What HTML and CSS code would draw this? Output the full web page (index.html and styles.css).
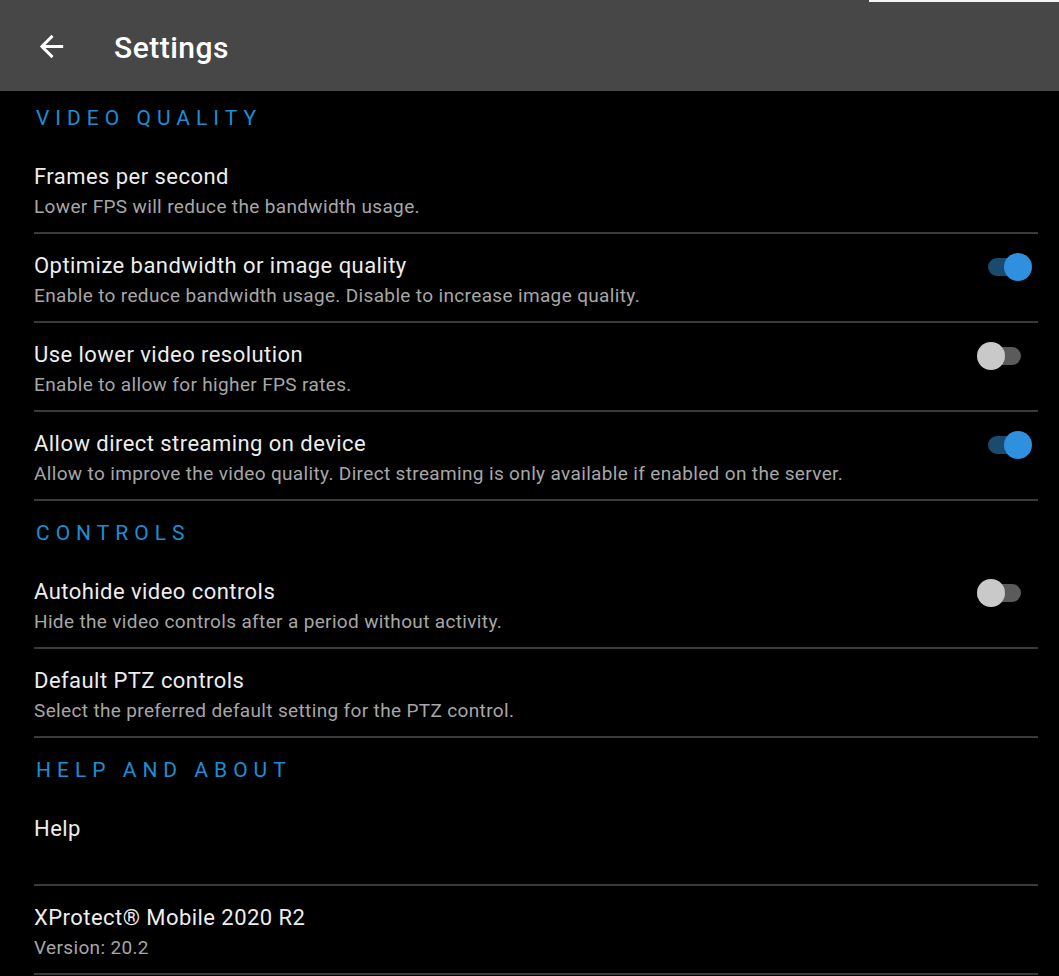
FILE: index.html
```html
<!DOCTYPE html>
<html lang="en">
<head>
<meta charset="utf-8">
<title>Settings</title>
<link rel="stylesheet" href="styles.css">
</head>
<body>
<div class="screen">
  <div class="status-strip"></div>
  <header class="appbar">
    <svg class="back" viewBox="0 0 24 24" width="35" height="35" aria-hidden="true">
      <path fill="#fff" d="M20 11H7.83l5.59-5.59L12 4l-8 8 8 8 1.41-1.41L7.83 13H20v-2z"/>
    </svg>
    <h1 class="appbar-title">Settings</h1>
  </header>

  <main class="list">
    <div class="category category-first">VIDEO QUALITY</div>

    <div class="pref">
      <div class="pref-text">
        <div class="pref-title">Frames per second</div>
        <div class="pref-summary">Lower FPS will reduce the bandwidth usage.</div>
      </div>
    </div>

    <div class="pref">
      <div class="pref-text">
        <div class="pref-title">Optimize bandwidth or image quality</div>
        <div class="pref-summary">Enable to reduce bandwidth usage. Disable to increase image quality.</div>
      </div>
      <div class="switch on"><span class="track"></span><span class="thumb"></span></div>
    </div>

    <div class="pref">
      <div class="pref-text">
        <div class="pref-title">Use lower video resolution</div>
        <div class="pref-summary">Enable to allow for higher FPS rates.</div>
      </div>
      <div class="switch"><span class="track"></span><span class="thumb"></span></div>
    </div>

    <div class="pref">
      <div class="pref-text">
        <div class="pref-title">Allow direct streaming on device</div>
        <div class="pref-summary">Allow to improve the video quality. Direct streaming is only available if enabled on the server.</div>
      </div>
      <div class="switch on"><span class="track"></span><span class="thumb"></span></div>
    </div>

    <div class="category">CONTROLS</div>

    <div class="pref">
      <div class="pref-text">
        <div class="pref-title">Autohide video controls</div>
        <div class="pref-summary">Hide the video controls after a period without activity.</div>
      </div>
      <div class="switch"><span class="track"></span><span class="thumb"></span></div>
    </div>

    <div class="pref">
      <div class="pref-text">
        <div class="pref-title">Default PTZ controls</div>
        <div class="pref-summary">Select the preferred default setting for the PTZ control.</div>
      </div>
    </div>

    <div class="category">HELP AND ABOUT</div>

    <div class="pref">
      <div class="pref-text">
        <div class="pref-title">Help</div>
        <div class="pref-summary"></div>
      </div>
    </div>

    <div class="pref">
      <div class="pref-text">
        <div class="pref-title">XProtect® Mobile 2020 R2</div>
        <div class="pref-summary">Version: 20.2</div>
      </div>
    </div>
  </main>
</div>
</body>
</html>
```

FILE: styles.css
```css
* { box-sizing: border-box; }

html, body {
  margin: 0;
  padding: 0;
  background: #000;
}

body {
  font-family: Roboto, "Noto Sans", "Liberation Sans", sans-serif;
  color: #ececec;
}

.screen {
  position: relative;
  width: 1059px;
  height: 976px;
  overflow: hidden;
  background: #000;
}

.status-strip {
  position: absolute;
  top: 0;
  left: 869px;
  width: 190px;
  height: 2px;
  background: #f4f4f4;
}

.appbar {
  height: 91px;
  background: #474747;
  display: flex;
  align-items: center;
  padding-left: 34px;
}

.back {
  display: block;
  flex: none;
  margin-top: 1px;
}

.appbar-title {
  margin: 4px 0 0 45px;
  font-size: 30px;
  letter-spacing: 0.5px;
  font-weight: 500;
  color: #fff;
  line-height: 1;
}

.list {
  display: flex;
  flex-direction: column;
}

.category {
  padding: 17px 0 12px 36px;
  line-height: 30px;
  font-size: 21px;
  letter-spacing: 6px;
  color: #1c8ed6;
}

.category-first {
  padding-top: 12px;
}

.pref {
  display: flex;
  align-items: flex-start;
  margin: 0 21px 0 34px;
  padding: 17px 0 10px;
  border-bottom: 2px solid #3a3a3a;
  min-height: 89px;
}

.pref-text {
  flex: 1;
  min-width: 0;
}

.pref-title {
  font-size: 22px;
  letter-spacing: 0.45px;
  line-height: 30px;
  color: #ededed;
}

.pref-summary {
  font-size: 19px;
  letter-spacing: 0.35px;
  line-height: 30px;
  min-height: 30px;
  color: #a7a7a7;
}

.switch {
  position: relative;
  flex: none;
  width: 56px;
  height: 28px;
  margin-top: 2px;
  margin-right: 5px;
}

.track {
  position: absolute;
  left: 11px;
  top: 5px;
  width: 33px;
  height: 18px;
  border-radius: 9px;
  background: #5b5b5b;
}

.thumb {
  position: absolute;
  left: 0;
  top: 0;
  width: 28px;
  height: 28px;
  border-radius: 50%;
  background: #c9c9c9;
}

.switch.on .track {
  background: #1b4a6f;
}

.switch.on .thumb {
  left: 27px;
  background: #2f90e0;
}
```
